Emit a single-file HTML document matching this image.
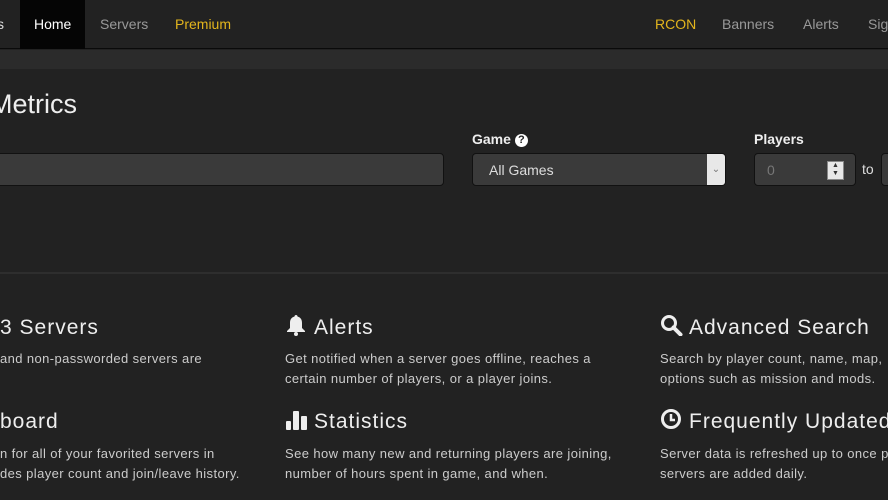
<!DOCTYPE html>
<html><head><meta charset="utf-8"><style>
*{margin:0;padding:0;box-sizing:border-box}
body{width:888px;height:500px;overflow:hidden;background:#222;font-family:"Liberation Sans",sans-serif;color:#ddd;position:relative}
.a{position:absolute;white-space:nowrap}
.nav{position:absolute;left:0;top:0;width:888px;height:49px;background:#222;border-bottom:1px solid #0a0a0a}
.nav .a{font-size:14px;top:16px;color:#999}
.strip{position:absolute;left:0;top:50px;width:888px;height:19px;background:#2b2b2b}
.inp{position:absolute;background:#3a3a3a;border:1px solid #111;border-radius:4px;height:33px;top:153px}
.lbl{font-size:14px;font-weight:bold;color:#eee;top:131px}
.h{font-size:21px;color:#eee;letter-spacing:1px}
.p{font-size:13px;color:#ccc;line-height:20px;letter-spacing:0.4px}
</style></head><body>
<div class="nav">
<span class="a" style="left:-3px;color:#ddd">s</span>
<div class="a" style="left:20px;top:0;width:65px;height:49px;background:#050505"></div>
<span class="a" style="left:34px;color:#fff">Home</span>
<span class="a" style="left:100px">Servers</span>
<span class="a" style="left:175px;color:#e3b51d">Premium</span>
<span class="a" style="left:655px;color:#e3b51d">RCON</span>
<span class="a" style="left:722px">Banners</span>
<span class="a" style="left:803px">Alerts</span>
<span class="a" style="left:868px">Sign</span>
</div>
<div class="strip"></div>
<span class="a" style="left:-10px;top:89px;font-size:27px;color:#eee">Metrics</span>
<div class="inp" style="left:-10px;width:454px"></div>
<span class="a lbl" style="left:472px">Game <span style="display:inline-block;width:13px;height:13px;border-radius:50%;background:#fff;color:#222;font-size:11px;text-align:center;line-height:13px;vertical-align:1px">?</span></span>
<div class="inp" style="left:472px;width:254px"><span class="a" style="left:16px;top:8px;font-size:14px;color:#ddd;font-weight:normal">All Games</span><div class="a" style="right:0;top:0;width:18px;height:31px;background:#e8e8e8;border-radius:0 3px 3px 0;color:#777;font-size:10px;text-align:center;line-height:31px">&#8964;</div></div>
<span class="a lbl" style="left:754px">Players</span>
<div class="inp" style="left:754px;width:102px"><span class="a" style="left:12px;top:8px;font-size:14px;color:#777">0</span><div class="a" style="left:72px;top:7px;width:17px;height:19px;background:#e8e8e8;border:1px solid #888;font-size:7px;color:#333;text-align:center;line-height:8px">&#9650;<br>&#9660;</div></div>
<span class="a" style="left:862px;top:161px;font-size:14px;color:#ddd">to</span>
<div class="inp" style="left:881px;width:40px"></div>
<div class="a" style="left:0;top:272px;width:888px;height:2px;background:#2e2e2e"></div>

<span class="a h" style="left:0;top:316px">3 Servers</span>
<span class="a p" style="left:0;top:349px">and non-passworded servers are</span>
<span class="a h" style="left:0;top:410px">board</span>
<span class="a p" style="left:0;top:444px">n for all of your favorited servers in<br>des player count and join/leave history.</span>

<svg class="a" style="left:286px;top:314px" width="20" height="22" viewBox="0 0 20 22"><path d="M10 1c-1 0-1.5.7-1.5 1.5C5 3.5 4 6 4 9v5l-3 3v1h18v-1l-3-3V9c0-3-1-5.5-4.5-6.5C11.5 1.7 11 1 10 1z" fill="#eee"/><circle cx="10" cy="20" r="2" fill="#eee"/></svg>
<span class="a h" style="left:314px;top:316px">Alerts</span>
<span class="a p" style="left:285px;top:349px">Get notified when a server goes offline, reaches a<br>certain number of players, or a player joins.</span>
<svg class="a" style="left:286px;top:410px" width="22" height="20" viewBox="0 0 22 20"><rect x="0" y="11" width="5" height="9" rx="1" fill="#eee"/><rect x="7" y="1" width="6" height="19" rx="1" fill="#eee"/><rect x="15" y="6" width="6" height="14" rx="1" fill="#eee"/></svg>
<span class="a h" style="left:314px;top:410px">Statistics</span>
<span class="a p" style="left:285px;top:444px">See how many new and returning players are joining,<br>number of hours spent in game, and when.</span>

<svg class="a" style="left:660px;top:314px" width="24" height="22" viewBox="0 0 24 22"><circle cx="9" cy="9" r="6.5" fill="none" stroke="#eee" stroke-width="3"/><path d="M13.5 13.5l7 7" stroke="#eee" stroke-width="4" stroke-linecap="round"/></svg>
<span class="a h" style="left:689px;top:316px">Advanced Search</span>
<span class="a p" style="left:660px;top:349px">Search by player count, name, map,<br>options such as mission and mods.</span>
<svg class="a" style="left:660px;top:408px" width="22" height="22" viewBox="0 0 22 22"><circle cx="11" cy="11" r="8.5" fill="none" stroke="#eee" stroke-width="3"/><path d="M11 6v6h4" fill="none" stroke="#eee" stroke-width="2.5"/></svg>
<span class="a h" style="left:689px;top:410px">Frequently Updated</span>
<span class="a p" style="left:660px;top:444px">Server data is refreshed up to once per<br>servers are added daily.</span>
</body></html>
